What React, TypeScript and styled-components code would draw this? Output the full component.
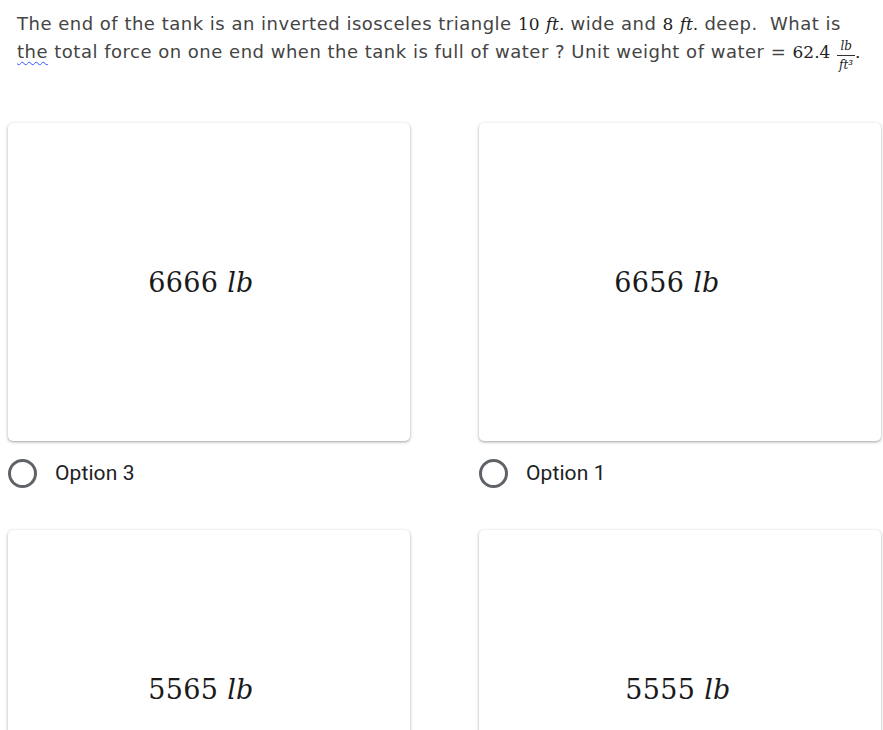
import React from 'react';
import styled, { createGlobalStyle } from 'styled-components';

const GlobalStyle = createGlobalStyle`
  html, body {
    margin: 0;
    padding: 0;
    background: #ffffff;
  }
`;

const Page = styled.div`
  width: 883px;
  height: 730px;
  overflow: hidden;
  background: #ffffff;
  padding: 0 2px 0 8px;
  box-sizing: border-box;
`;

const Question = styled.div`
  padding: 10px 0 0 9px;
  height: 123px;
  box-sizing: border-box;
  font-family: 'DejaVu Sans', sans-serif;
  font-size: 18px;
  letter-spacing: 0.5px;
  line-height: 28px;
  color: #444444;
`;

const Line = styled.div`
  white-space: nowrap;
`;

const Math = styled.span<{ italic?: boolean }>`
  font-family: 'DejaVu Serif', 'Liberation Serif', serif;
  font-style: ${({ italic }) => (italic ? 'italic' : 'normal')};
  font-size: 17px;
  letter-spacing: 0;
  color: #222;
`;

const Spell = styled.span`
  text-decoration: underline wavy #3355ff;
  text-decoration-thickness: 1px;
  text-underline-offset: 3px;
`;

const Fraction = styled.span`
  display: inline-flex;
  flex-direction: column;
  align-items: center;
  vertical-align: middle;
  margin: -6px 0 -10px 7px;
  font-family: 'DejaVu Serif', serif;
  font-style: italic;
  font-size: 12px;
  letter-spacing: 0;
  line-height: 14px;
  color: #222;
`;

const Numer = styled.span`
  padding: 0 3px 2px;
  border-bottom: 1px solid #333;
`;

const Denom = styled.span`
  padding-top: 2px;
`;

const Grid = styled.div`
  display: grid;
  grid-template-columns: 402px 402px;
  column-gap: 69px;
  row-gap: 44px;
`;

const Choice = styled.div`
  display: flex;
  flex-direction: column;
  gap: 19px;
`;

const Card = styled.div<{ shift: number }>`
  height: 318px;
  border-radius: 5px;
  background: #ffffff;
  box-shadow: 0 1px 2px rgba(60, 64, 67, 0.3), 0 1px 3px 1px rgba(60, 64, 67, 0.15);
  display: flex;
  align-items: center;
  justify-content: center;
  padding-right: ${({ shift }) => shift}px;
  box-sizing: border-box;
`;

const Value = styled.span`
  font-family: 'DejaVu Serif', 'Liberation Serif', serif;
  font-size: 27px;
  color: #1a1a1a;
  letter-spacing: 0.3px;
`;

const Unit = styled.span`
  font-style: italic;
`;

const OptionRow = styled.label`
  display: flex;
  align-items: center;
  gap: 18px;
  height: 26px;
  font-family: Roboto, 'Noto Sans', sans-serif;
  font-size: 21px;
  letter-spacing: 0.1px;
  color: #202124;
`;

const Radio = styled.span`
  width: 23px;
  height: 23px;
  border: 3px solid #5f6368;
  border-radius: 50%;
  flex-shrink: 0;
`;

const choices = [
  { value: '6666', label: 'Option 3', shift: 16 },
  { value: '6656', label: 'Option 1', shift: 26 },
  { value: '5565', shift: 16 },
  { value: '5555', shift: 4 },
];

export default function App() {
  return (
    <>
      <GlobalStyle />
      <Page>
        <Question>
          <Line>
            The end of the tank is an inverted isosceles triangle <Math>10</Math>{' '}
            <Math italic>ft</Math>
            <Math>.</Math> wide and <Math>8</Math> <Math italic>ft</Math>
            <Math>.</Math> deep.&nbsp; What is
          </Line>
          <Line>
            <Spell>the</Spell> total force on one end when the tank is full of water ? Unit weight of water ={' '}
            <Math>62.4</Math>
            <Fraction>
              <Numer>lb</Numer>
              <Denom>ft³</Denom>
            </Fraction>
            <Math>.</Math>
          </Line>
        </Question>
        <Grid>
          {choices.map((c) => (
            <Choice key={c.value}>
              <Card shift={c.shift}>
                <Value>
                  {c.value} <Unit>lb</Unit>
                </Value>
              </Card>
              {c.label && (
                <OptionRow>
                  <Radio />
                  {c.label}
                </OptionRow>
              )}
            </Choice>
          ))}
        </Grid>
      </Page>
    </>
  );
}
